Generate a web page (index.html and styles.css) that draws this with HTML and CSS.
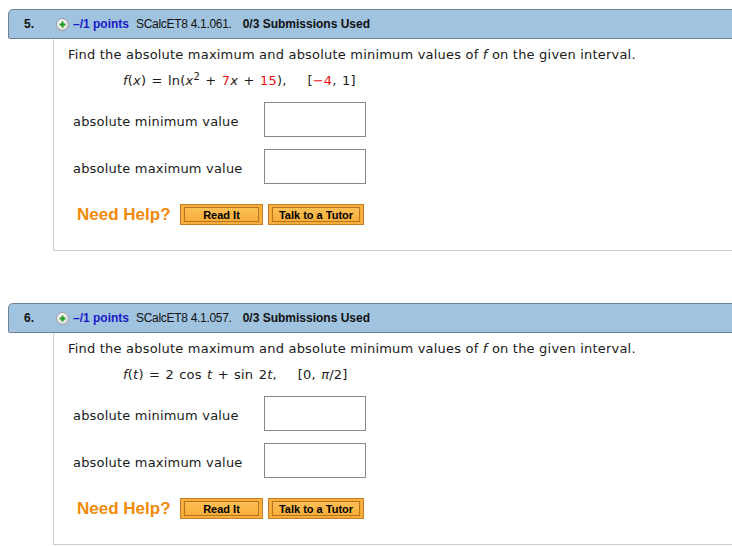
FILE: index.html
```html
<!DOCTYPE html>
<html>
<head>
<meta charset="utf-8">
<link rel="stylesheet" href="styles.css">
</head>
<body>
<div class="question">
  <div class="qhead">
    <span class="qnum">5.</span>
    <svg class="plus" width="13" height="13" viewBox="0 0 13 13"><defs><radialGradient id="g1" cx="0.4" cy="0.35" r="0.7"><stop offset="0" stop-color="#ffffff"/><stop offset="1" stop-color="#d8d8d8"/></radialGradient></defs><circle cx="6.5" cy="6.5" r="6" fill="url(#g1)" stroke="#9a9a9a" stroke-width="1"/><path d="M6.5 3.5v6M3.5 6.5h6" stroke="#1a9a1a" stroke-width="2"/></svg>
    <span class="pts">–/1 points</span>
    <span class="ref">SCalcET8 4.1.061.</span>
    <span class="subs">0/3 Submissions Used</span>
  </div>
  <div class="qbody">
    <div class="prompt">Find the absolute maximum and absolute minimum values of <i>f</i> on the given interval.</div>
    <div class="formula"><i>f</i>(<i>x</i>) = ln(<i>x</i><sup>2</sup> + <span class="red">7</span><i>x</i> + <span class="red">15</span>),<span class="sp"></span>[<span class="red">−4</span>, 1]</div>
    <div class="answer"><span class="label">absolute minimum value</span><span class="box"></span></div>
    <div class="answer"><span class="label">absolute maximum value</span><span class="box"></span></div>
    <div class="help">
      <span class="need">Need Help?</span>
      <span class="btn read"><span class="inner">Read It</span></span>
      <span class="btn tutor"><span class="inner">Talk to a Tutor</span></span>
    </div>
  </div>
</div>

<div class="question second">
  <div class="qhead">
    <span class="qnum">6.</span>
    <svg class="plus" width="13" height="13" viewBox="0 0 13 13"><defs><radialGradient id="g2" cx="0.4" cy="0.35" r="0.7"><stop offset="0" stop-color="#ffffff"/><stop offset="1" stop-color="#d8d8d8"/></radialGradient></defs><circle cx="6.5" cy="6.5" r="6" fill="url(#g2)" stroke="#9a9a9a" stroke-width="1"/><path d="M6.5 3.5v6M3.5 6.5h6" stroke="#1a9a1a" stroke-width="2"/></svg>
    <span class="pts">–/1 points</span>
    <span class="ref">SCalcET8 4.1.057.</span>
    <span class="subs">0/3 Submissions Used</span>
  </div>
  <div class="qbody">
    <div class="prompt">Find the absolute maximum and absolute minimum values of <i>f</i> on the given interval.</div>
    <div class="formula"><i>f</i>(<i>t</i>) = 2 cos <i>t</i> + sin 2<i>t</i>,<span class="sp"></span>[0, <i>π</i>/2]</div>
    <div class="answer"><span class="label">absolute minimum value</span><span class="box"></span></div>
    <div class="answer"><span class="label">absolute maximum value</span><span class="box"></span></div>
    <div class="help">
      <span class="need">Need Help?</span>
      <span class="btn read"><span class="inner">Read It</span></span>
      <span class="btn tutor"><span class="inner">Talk to a Tutor</span></span>
    </div>
  </div>
</div>
</body>
</html>
```
FILE: styles.css
```css
html, body {
  margin: 0;
  padding: 0;
  background: #ffffff;
}
body {
  padding: 9px 0 0 8px;
  overflow: hidden;
}
.question {
  display: flex;
  flex-direction: column;
}
.question.second {
  margin-top: 52px;
}
.qhead {
  display: flex;
  align-items: center;
  height: 28px;
  margin-right: -10px;
  background: #a0c3df;
  border: 1px solid #6e8293;
  border-top-left-radius: 5px;
  border-bottom-left-radius: 2px;
  font-family: "Liberation Sans", Arial, sans-serif;
  font-size: 12px;
  color: #111111;
}
.qnum {
  font-weight: bold;
  margin-left: 15px;
  width: 32px;
}
.plus {
  display: block;
  margin-right: 4px;
}
.pts {
  font-weight: bold;
  color: #1a1ac8;
}
.ref {
  margin-left: 7px;
  letter-spacing: -0.3px;
}
.subs {
  font-weight: bold;
  margin-left: 11px;
}
.qbody {
  margin-left: 45px;
  border-left: 1px solid #cccccc;
  border-bottom: 1px solid #cccccc;
  padding: 8px 0 25px 14px;
  font-family: "DejaVu Sans", Verdana, sans-serif;
  font-size: 13px;
  letter-spacing: 0.2px;
  color: #1a1a1a;
}
.prompt {
  line-height: 16px;
}
.formula {
  margin: 10px 0 0 55px;
  line-height: 16px;
  word-spacing: 1px;
}
.formula sup {
  font-size: 10px;
  line-height: 0;
  vertical-align: 5px;
}
.formula .sp {
  display: inline-block;
  width: 21px;
}
.red {
  color: #ee1111;
}
.answer {
  display: flex;
  align-items: center;
  margin-top: 13px;
}
.answer + .answer {
  margin-top: 12px;
}
.label {
  margin-left: 5px;
  padding-top: 3px;
  width: 191px;
}
.box {
  display: block;
  width: 100px;
  height: 33px;
  border: 1px solid #888888;
  background: #ffffff;
}
.help {
  display: flex;
  align-items: center;
  margin-top: 20px;
  font-family: "Liberation Sans", Arial, sans-serif;
  letter-spacing: 0;
}
.need {
  margin-left: 9px;
  font-size: 17px;
  font-weight: bold;
  color: #f08a0a;
  width: 103px;
}
.btn {
  display: block;
  height: 21px;
  box-sizing: border-box;
  border: 1px solid #c97c22;
  background: #f7ae3c;
  padding: 2px 3px;
}
.btn.read {
  width: 83px;
}
.btn.tutor {
  width: 96px;
  margin-left: 5px;
}
.inner {
  display: flex;
  align-items: center;
  justify-content: center;
  height: 100%;
  box-sizing: border-box;
  border: 1px solid #b8731c;
  background: linear-gradient(#fdc055, #f8ae3a);
  font-size: 11px;
  font-weight: bold;
  color: #000000;
}
```
